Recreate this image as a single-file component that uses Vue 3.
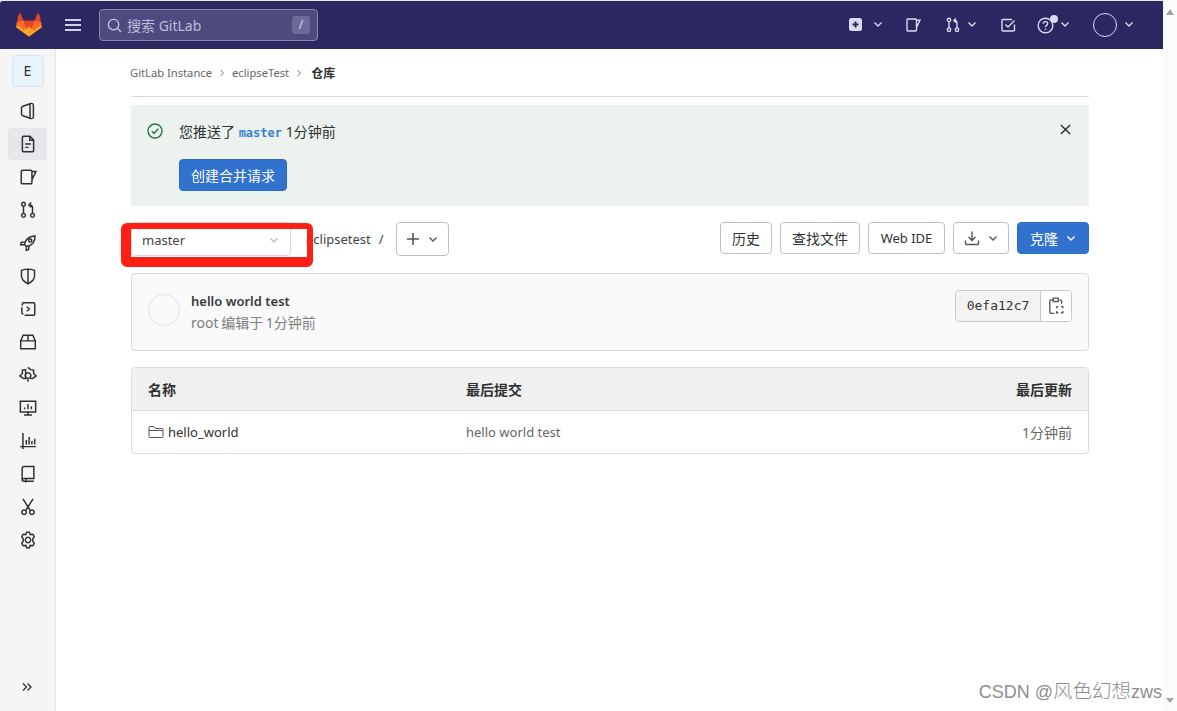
<script setup>
const icons = [
  ['proj', false], ['repo', true], ['issue', false], ['mr', false], ['rocket', false], ['shield', false],
  ['deploy', false], ['pkg', false], ['infra', false], ['monitor', false], ['chart', false], ['book', false], ['scissors', false], ['gear', false],
]
const paths = {
  proj: 'M3.5 3.8 L10.5 1.3 Q12.8 .9 12.8 3 V13 Q12.8 15.1 10.5 14.7 L3.5 12.2 Q2.2 11.7 2.2 10.8 V5.2 Q2.2 4.3 3.5 3.8Z M9.8 1.6 V14.4',
  repo: 'M3 2.2 Q3 1.2 4 1.2 H9.8 L13 4.4 V13.8 Q13 14.8 12 14.8 H4 Q3 14.8 3 13.8Z M9.6 1.2 V4.6 H13 M5.5 8 H10.5 M5.5 11 H8.5',
  issue: 'M2 3 Q2 2 3 2 H10.5 Q11.5 2 11.5 3 V13 Q11.5 14 10.5 14 H3 Q2 14 2 13Z M11.5 3.2 H15 L11.5 10.5',
  mr: 'M4 4.6 V11 M12 11 V6 Q12 3.5 9.5 3.5 M10.9 1.4 L8.8 3.5 L10.9 5.6 M4 1.2 a1.7 1.7 0 1 0 .01 0 M4 11 a1.7 1.7 0 1 0 .01 0 M12 11 a1.7 1.7 0 1 0 .01 0',
  rocket: 'M5.5 7 C7 3.5 10.5 1.8 14.3 1.7 C14.2 5.5 12.5 9 9 10.5 L6.5 11 L5 9.5Z M5.5 7 L2 7.5 L1.5 9.5 L5 9.5 M9 10.5 L8.5 14 L6.5 14.5 L6.5 11 M10 4.4 a1.4 1.4 0 1 0 .01 0',
  shield: 'M2.2 3 Q8 .8 13.8 3 V8 Q13.8 12 8 15 Q2.2 12 2.2 8Z M8 2 V14.6',
  deploy: 'M3 5 V3.5 Q3 2.5 4 2.5 H13 Q14 2.5 14 3.5 V12.5 Q14 13.5 13 13.5 H5 M2.5 6.5 V11 Q2.5 12.5 4 12.5 M6.8 6 L9.3 8 L6.8 10',
  pkg: 'M1.5 7 L3.7 2 H12.3 L14.5 7 V14 H1.5Z M1.5 7 H14.5 M8 2 V7',
  infra: 'M8 1.2 L10.2 3.2 L13 3.6 V6.6 L15.2 8.8 L12 11.2 H10 M6 11.2 H4 L.8 8.8 L3 6.6 V3.6 L5.8 3.2Z M8 6 a2.5 2.5 0 1 0 .01 0 M8 11 V14',
  monitor: 'M1.2 2 H14.8 V11.5 H1.2Z M8 11.5 V14 M4.5 14.2 H11.5 M5 9 V7.5 M8 9 V4.5 M11 9 V6.5',
  chart: 'M3.5 .8 V15.2 M1 13 H15 M6.5 11 V7 M9 11 V4.5 M11.5 11 V8 M14 11 V6',
  book: 'M2.8 3 Q2.8 1.3 4.5 1.3 H13.2 V12 H4.5 Q2.8 12 2.8 13.2 Q2.8 14.5 4.5 14.5 M2.8 3 V13 M4.5 14.5 H13.2 M6 12 V15.5',
  scissors: 'M3.5 .8 L10 11 M12.5 .8 L6 11 M4.5 10.7 a2 2 0 1 0 .01 0 M11.5 10.7 a2 2 0 1 0 .01 0',
  gear: 'M6.8 1.2 H9.2 L10 3.2 L12.3 2.9 L13.6 5.1 L12.2 7 V9 L13.6 10.9 L12.3 13.1 L10 12.8 L9.2 14.8 H6.8 L6 12.8 L3.7 13.1 L2.4 10.9 L3.8 9 V7 L2.4 5.1 L3.7 2.9 L6 3.2Z M8 5.6 a2.4 2.4 0 1 0 .01 0',
}
</script>

<template>
  <div class="screen">
    <div class="page">
      <header class="topbar">
        <svg class="logo" width="26" height="25" viewBox="0 0 26 25">
          <path d="M13 24.5 L0.5 15 L2 4 L4.2 0.5 L7.5 8.5 H18.5 L21.8 0.5 L24 4 L25.5 15Z" fill="#e24329" />
          <path d="M13 24.5 L7.5 8.5 L0.5 10.5 L0.6 15.5Z" fill="#fc6d26" />
          <path d="M13 24.5 L18.5 8.5 L25.5 10.5 L25.4 15.5Z" fill="#fc6d26" />
          <path d="M13 24.5 L5.5 16 L0.5 13.5 V15.5Z M13 24.5 L20.5 16 L25.5 13.5 V15.5Z" fill="#fca326" />
          <path d="M13 24.5 L7.2 18.8 L13 14.8 L18.8 18.8Z" fill="#fca326" />
        </svg>
        <span class="burger"><i></i><i></i><i></i></span>
        <div class="search">
          <svg width="15" height="15" viewBox="0 0 16 16" fill="none" stroke="#c9c6e4" stroke-width="1.4"><circle cx="7" cy="7" r="5.6" /><path d="M11 11 L15 15" /></svg>
          <span class="search-text">搜索 GitLab</span>
          <span class="kbd">/</span>
        </div>
        <div class="top-right">
          <svg class="t-plus" width="13" height="13" viewBox="0 0 13 13"><rect width="13" height="13" rx="2.5" fill="#dcdaf0" /><path d="M6.5 3.5 V9.5 M3.5 6.5 H9.5" stroke="#2b2760" stroke-width="2" /></svg>
          <svg class="chev t1" width="10" height="10" viewBox="0 0 10 10"><path d="M1.5 3.5 L5 7 L8.5 3.5" /></svg>
          <svg class="ti t2" width="16" height="16" viewBox="0 0 16 16"><path :d="paths.issue" /></svg>
          <svg class="ti t3" width="16" height="16" viewBox="0 0 16 16"><path :d="paths.mr" /></svg>
          <svg class="chev t4" width="10" height="10" viewBox="0 0 10 10"><path d="M1.5 3.5 L5 7 L8.5 3.5" /></svg>
          <svg class="ti t5" width="16" height="16" viewBox="0 0 16 16"><path d="M14.5 7.5 V13 Q14.5 14 13.5 14 H3 Q2 14 2 13 V3.5 Q2 2.5 3 2.5 H12 M5.5 7.5 L8 10 L14.5 3.5" /></svg>
          <span class="help">
            <svg class="ti" width="17" height="17" viewBox="0 0 17 17"><circle cx="8.5" cy="8.5" r="7.3" /><path d="M6.3 6.8 Q6.3 4.6 8.5 4.6 Q10.7 4.6 10.7 6.6 Q10.7 7.8 9.3 8.5 Q8.5 9 8.5 10.2 M8.5 11.8 V13" /></svg>
            <i class="dot"></i>
          </span>
          <svg class="chev t6" width="10" height="10" viewBox="0 0 10 10"><path d="M1.5 3.5 L5 7 L8.5 3.5" /></svg>
          <span class="avatar"></span>
          <svg class="chev t7" width="10" height="10" viewBox="0 0 10 10"><path d="M1.5 3.5 L5 7 L8.5 3.5" /></svg>
        </div>
      </header>
      <div class="body">
        <aside class="sidebar">
          <div class="proj-badge">E</div>
          <div class="nav">
            <div v-for="ic in icons" :key="ic[0]" class="nav-item" :class="{ active: ic[1] }">
              <svg width="18" height="18" viewBox="0 0 16 16"><path :d="paths[ic[0]]" /></svg>
            </div>
          </div>
          <div class="collapse">
            <svg width="12" height="12" viewBox="0 0 12 12"><path d="M2 2.5 L5.5 6 L2 9.5 M6.5 2.5 L10 6 L6.5 9.5" /></svg>
          </div>
        </aside>
        <main class="main">
          <nav class="crumbs">
            <span>GitLab Instance</span>
            <svg width="8" height="8" viewBox="0 0 8 8"><path d="M2.5 1 L5.5 4 L2.5 7" /></svg>
            <span>eclipseTest</span>
            <svg width="8" height="8" viewBox="0 0 8 8"><path d="M2.5 1 L5.5 4 L2.5 7" /></svg>
            <b>仓库</b>
          </nav>
          <section class="alert">
            <svg class="ok" width="16" height="16" viewBox="0 0 16 16"><circle cx="8" cy="8" r="7" /><path d="M4.8 8.2 L7 10.4 L11.2 5.8" /></svg>
            <div class="alert-body">
              <p>您推送了 <code>master</code> 1分钟前</p>
              <button class="btn primary create">创建合并请求</button>
            </div>
            <svg class="close" width="11" height="11" viewBox="0 0 12 12"><path d="M1 1 L11 11 M11 1 L1 11" /></svg>
          </section>
          <div class="toolbar">
            <div class="branch">
              <span>master</span>
              <svg class="gchev light" width="10" height="10" viewBox="0 0 10 10"><path d="M1.5 3.5 L5 7 L8.5 3.5" /></svg>
            </div>
            <span class="path">eclipsetest</span>
            <span class="slash">/</span>
            <button class="btn plus">
              <svg class="pl" width="14" height="14" viewBox="0 0 14 14"><path d="M7 1 V13 M1 7 H13" /></svg>
              <svg class="gchev" width="10" height="10" viewBox="0 0 10 10"><path d="M1.5 3.5 L5 7 L8.5 3.5" /></svg>
            </button>
            <div class="spacer"></div>
            <button class="btn w-hist z">历史</button>
            <button class="btn w-find z">查找文件</button>
            <button class="btn w-ide">Web IDE</button>
            <button class="btn w-dl">
              <svg class="dl" width="16" height="16" viewBox="0 0 16 16"><path d="M8 1.5 V10.5 M4.5 7 L8 10.5 L11.5 7 M1.5 10.5 V13.5 Q1.5 14.5 2.5 14.5 H13.5 Q14.5 14.5 14.5 13.5 V10.5" /></svg>
              <svg class="gchev" width="10" height="10" viewBox="0 0 10 10"><path d="M1.5 3.5 L5 7 L8.5 3.5" /></svg>
            </button>
            <button class="btn primary w-clone z">
              克隆
              <svg class="wchev" width="10" height="10" viewBox="0 0 10 10"><path d="M1.5 3.5 L5 7 L8.5 3.5" /></svg>
            </button>
          </div>
          <section class="commit">
            <span class="c-avatar"></span>
            <div class="c-text">
              <div class="c-title">hello world test</div>
              <div class="c-sub">root 编辑于 1分钟前</div>
            </div>
            <div class="sha">
              <span class="sha-id">0efa12c7</span>
              <span class="sha-copy">
                <svg width="18" height="18" viewBox="0 0 16 16"><path d="M5 2.5 H3.5 Q2.5 2.5 2.5 3.5 V13.5 Q2.5 14.5 3.5 14.5 H6.5 M11 2.5 H12 Q13 2.5 13 3.5 V6 M5.5 1 H10 V4 H5.5Z M8.5 8.5 H10 M12.5 8.5 H14 V10 M14 12.5 V14 H12.5 M10 14 H8.5 V12.5 M8.5 10 V8.5" /></svg>
              </span>
            </div>
          </section>
          <section class="table">
            <div class="row head">
              <span class="col1">名称</span>
              <span class="col2">最后提交</span>
              <span class="col3">最后更新</span>
            </div>
            <div class="row">
              <span class="col1 file">
                <svg width="16" height="16" viewBox="0 0 16 16"><path d="M1 3.5 Q1 2.5 2 2.5 H6 L7.5 4.5 H14 Q15 4.5 15 5.5 V12.5 Q15 13.5 14 13.5 H2 Q1 13.5 1 12.5Z M1 6.5 H15" /></svg>
                hello_world
              </span>
              <span class="col2 muted">hello world test</span>
              <span class="col3 muted z">1分钟前</span>
            </div>
          </section>
        </main>
      </div>
    </div>
    <div class="scrollbar">
      <i class="up"></i>
      <i class="down"></i>
    </div>
    <div class="redbox"></div>
    <div class="mark">CSDN @<span class="mark-z">风色幻想</span>zws</div>
  </div>
</template>

<style>
html, body { margin: 0; overflow: hidden; }
</style>

<style scoped>
.screen {
  position: relative; display: flex; width: 1177px; height: 711px; overflow: hidden; background: #fff;
  font-family: "Noto Sans", "Noto Sans CJK SC", sans-serif; font-size: 13px; color: #303030;
}
.z { font-size: 14px; }
.page { width: 1163px; display: flex; flex-direction: column; padding-top: 1px; box-sizing: border-box; background: #e8e8e8; }
.scrollbar { width: 14px; background: #fbfbfb; position: relative; }
.scrollbar .up { position: absolute; top: 9px; left: 0; border: 4px solid transparent; border-top: 0; border-bottom: 6px solid #a3a3a3; margin-left: 3px; }
.scrollbar .down { position: absolute; bottom: 8px; left: 0; border: 4px solid transparent; border-bottom: 0; border-top: 5px solid #a3a3a3; margin-left: 3px; }

.topbar { height: 48px; flex: none; background: #2b2760; display: flex; align-items: center; position: relative; border-radius: 3px 0 0 0; }
.logo { margin-left: 16px; margin-top: -2px; }
.burger { margin-left: 23px; width: 16px; display: flex; flex-direction: column; gap: 3px; }
.burger i { display: block; height: 2px; background: #d1d0e6; }
.search {
  margin-left: 18px; height: 30px; border: 1px solid #8a87ab; border-radius: 4px; background: #4d4a7e;
  display: flex; align-items: center; padding: 0 7px; color: #bfbddb; font-size: 14px; width: 203px;
}
.search-text { margin-left: 5px; flex: 1; }
.kbd { width: 18px; height: 18px; border-radius: 3px; background: #6c6a99; font-size: 12px; text-align: center; line-height: 18px; color: #dcdaf0; }
.top-right svg, .top-right span { position: absolute; }
.top-right path, .top-right circle { fill: none; }
.top-right .t-plus path { stroke: #2b2760; }
.ti path, .ti circle { stroke: #dcdaf0; stroke-width: 1.4; }
.chev path { stroke: #dcdaf0; stroke-width: 1.4; }
.chev { top: 18px; }
.t-plus { left: 849px; top: 17px; }
.t1 { left: 873px; }
.t2 { left: 905px; top: 16px; }
.t3 { left: 945px; top: 16px; }
.t4 { left: 967px; }
.t5 { left: 1000px; top: 16px; }
.help { left: 1037px; top: 16px; width: 17px; height: 17px; }
.help .ti { top: 0; left: 0; }
.dot { position: absolute; left: 13px; top: -2px; width: 8px; height: 8px; border-radius: 50%; background: #dcdaf0; }
.t6 { left: 1060px; }
.avatar { left: 1093px; top: 12px; width: 22px; height: 22px; border: 1px solid #dcdaf0; border-radius: 50%; }
.t7 { left: 1124px; }

.body { flex: 1; display: flex; background: #fff; min-height: 0; }
.sidebar { width: 55px; flex: none; background: #f5f5f5; border-right: 1px solid #e6e6e6; display: flex; flex-direction: column; align-items: center; }
.proj-badge { margin-top: 6px; width: 30px; height: 30px; border: 1px solid #dae2ef; border-radius: 4px; background: #e9f3fc; text-align: center; line-height: 30px; font-size: 14px; color: #303030; }
.nav { margin-top: 8px; display: flex; flex-direction: column; gap: 1px; flex: 1; }
.nav-item { width: 39px; height: 32px; border-radius: 4px; display: flex; align-items: center; justify-content: center; }
.nav-item.active { background: #e6e6eb; }
.nav-item svg, .collapse svg { fill: none; stroke: #303030; stroke-width: 1.3; }
.collapse { height: 48px; display: flex; align-items: center; margin-right: 2px; }

.main { flex: 1; padding: 0 74px 0 75px; min-width: 0; }
.crumbs { height: 47px; border-bottom: 1px solid #dcdcdc; display: flex; align-items: center; gap: 6px; font-size: 11.2px; color: #666; }
.crumbs > span:first-child { margin-left: -1px; }
.crumbs svg { fill: none; stroke: #777; stroke-width: 1; }
.crumbs b { color: #303030; font-weight: 700; font-size: 12px; margin-left: 2px; }

.alert { margin-top: 8px; height: 101px; background: #ecf3ee; display: flex; padding: 17px 18px 0 16px; box-sizing: border-box; position: relative; }
.ok { margin-top: 1px; fill: none; stroke: #217645; stroke-width: 1.4; }
.alert-body { margin-left: 16px; flex: 1; }
.alert-body p { margin: 0; line-height: 19px; font-size: 14px; }
.alert-body code { font-family: "DejaVu Sans Mono", monospace; font-size: 12px; font-weight: 700; color: #3a7ed6; }
.close { margin-top: 2px; fill: none; stroke: #303030; stroke-width: 1.6; }

.btn { font: inherit; height: 32px; background: #fff; border: 1px solid #bfbfbf; border-radius: 4px; color: #303030; padding: 0; box-sizing: border-box; display: inline-flex; align-items: center; justify-content: center; }
.btn.z { font-size: 14px; }
.btn.primary { background: #3272cf; border-color: #2d6cc6; color: #fff; }
.create { margin-top: 17px; margin-top: 16px; width: 108px; font-size: 14px; }

.toolbar { margin-top: 16px; height: 34px; display: flex; align-items: flex-start; }
.branch { width: 160px; height: 34px; box-sizing: border-box; border: 1px solid #d9d9d9; border-radius: 4px; display: flex; align-items: center; justify-content: space-between; padding: 2px 11px 0 10px; color: #444; }
.light { stroke: #bbb !important; }
.gchev, .wchev, .pl, .dl { fill: none; stroke-width: 1.4; }
.gchev { stroke: #555; }
.wchev { stroke: #fff; margin-left: 8px; }
.pl { stroke: #555; stroke-width: 1.6; margin-right: 8px; }
.dl { stroke: #555; margin-right: 8px; }
.path { margin-left: 15px; color: #444; line-height: 34px; }
.slash { margin-left: 8px; color: #444; margin-right: 12px; line-height: 34px; }
.plus { width: 53px; height: 34px; }
.spacer { flex: 1; }
.toolbar .btn + .btn { margin-left: 8px; }
.w-hist { width: 52px; } .w-find { width: 80px; } .w-ide { width: 77px; } .w-dl { width: 56px; } .w-clone { width: 72px; }

.commit { margin-top: 17px; height: 78px; box-sizing: border-box; border: 1px solid #dcdcdc; border-radius: 4px; background: #fafafa; display: flex; align-items: center; padding: 0 16px; }
.c-avatar { width: 32px; height: 32px; box-sizing: border-box; border: 1px solid #e4e4e4; border-radius: 50%; align-self: flex-start; margin-top: 20px; }
.c-text { margin-left: 11px; flex: 1; line-height: 21px; }
.c-title { font-weight: 600; color: #3a3a3a; }
.c-sub { color: #7d7d7d; font-size: 14px; word-spacing: -1px; }
.sha { display: flex; height: 32px; border: 1px solid #c9c9c9; border-radius: 4px; overflow: hidden; align-self: flex-start; margin-top: 16px; box-sizing: border-box; }
.sha-id { width: 85px; box-sizing: border-box; background: #f3f3f3; font-family: "DejaVu Sans Mono", monospace; font-size: 13px; line-height: 30px; text-align: center; border-right: 1px solid #c9c9c9; color: #333; }
.sha-copy { width: 30px; display: flex; align-items: center; justify-content: center; background: #fff; }
.sha-copy svg { fill: none; stroke: #555; stroke-width: 1.2; }

.table { margin-top: 16px; border: 1px solid #dcdcdc; border-radius: 4px; overflow: hidden; }
.row { height: 42px; display: flex; align-items: center; padding: 0 16px; }
.row.head { height: 43px; background: #f0f0f0; border-bottom: 1px solid #dcdcdc; font-weight: 600; font-size: 14px; box-sizing: border-box; }
.col1 { width: 318px; }
.col2 { flex: 1; }
.col3 { text-align: right; }
.file { display: flex; align-items: center; gap: 4px; }
.file svg { fill: none; stroke: #555; stroke-width: 1; }
.muted { color: #666; }

.redbox { position: absolute; left: 121px; top: 223px; width: 192px; height: 44px; border-style: solid; border-color: #ff2015; border-width: 6px 6px 10px 10px; border-radius: 6px; box-sizing: border-box; }
.mark { position: absolute; right: 15px; bottom: 7px; font-size: 18px; color: #8e8e8e; font-family: "Liberation Sans", "Noto Sans CJK SC", sans-serif; }
.mark-z { font-size: 19.5px; font-weight: 300; }
</style>
